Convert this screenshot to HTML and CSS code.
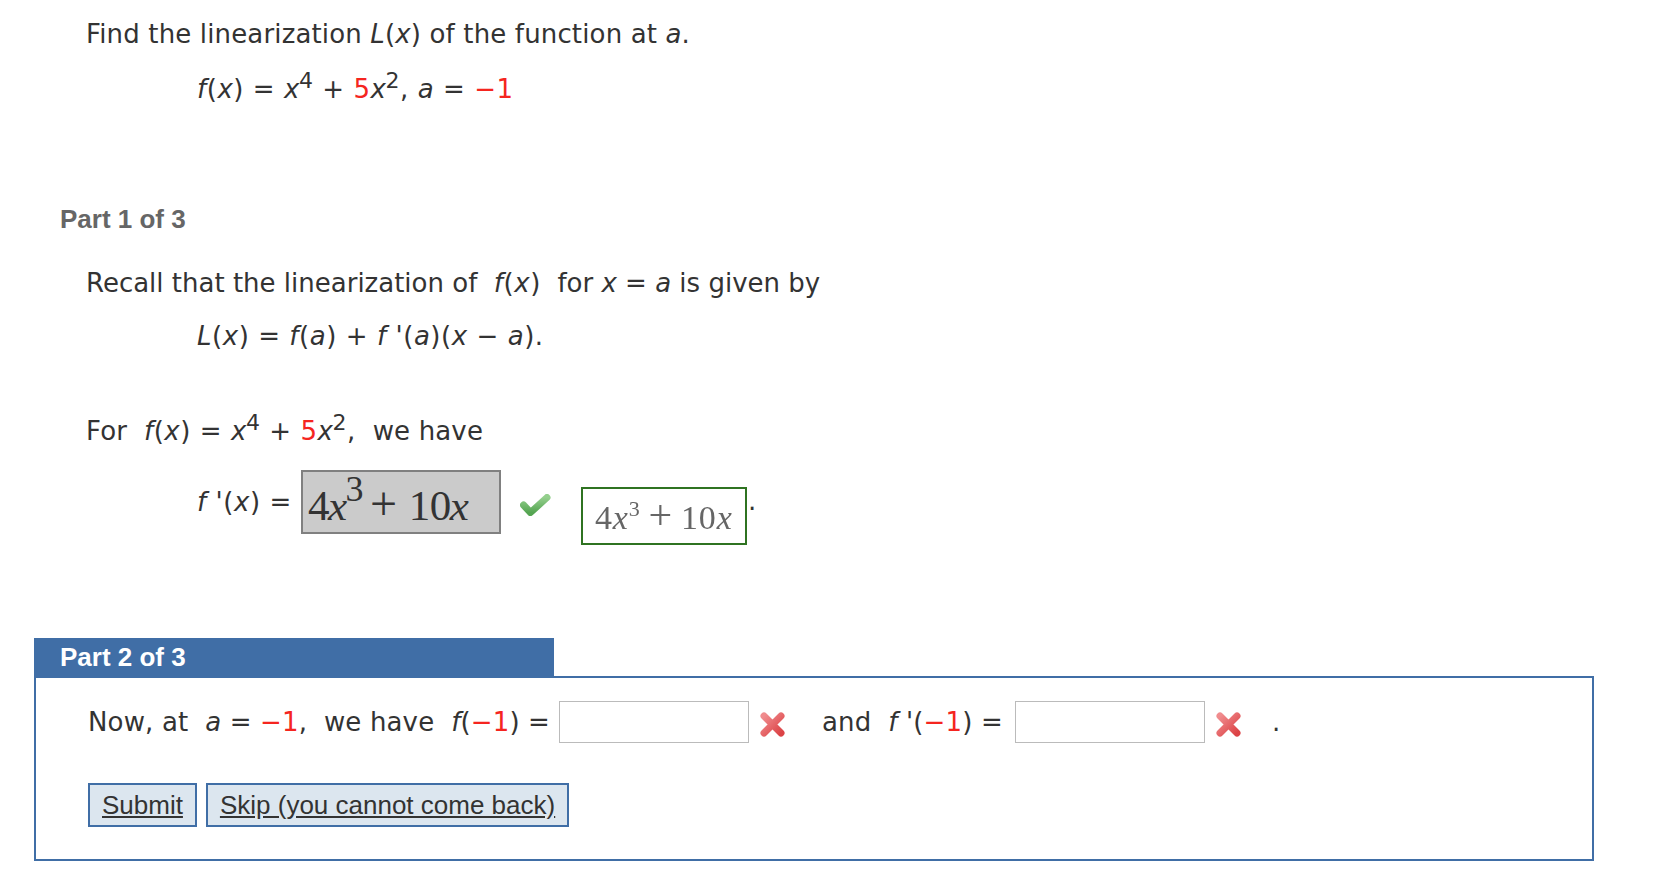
FILE: index.html
```html
<!DOCTYPE html>
<html lang="en">
<head>
<meta charset="utf-8">
<title>Linearization</title>
<link rel="stylesheet" href="styles.css">
</head>
<body>
<main class="page">
  <p class="line first">Find the linearization <i>L</i>(<i>x</i>) of the function at <i>a</i>.</p>
  <p class="line eq eq-one math"><i>f</i>(<i>x</i>) = <i>x</i><sup class="sup">4</sup> + <span class="red">5</span><i>x</i><sup class="sup">2</sup>, <i>a</i> = <span class="red">−1</span></p>

  <h2 class="part-title">Part 1 of 3</h2>
  <p class="line recall">Recall that the linearization of &nbsp;<span class="math"><i>f</i>(<i>x</i>)</span> &nbsp;for <i>x</i> = <i>a</i> is given by</p>
  <p class="line eq eq-two math"><i>L</i>(<i>x</i>) = <i>f</i>(<i>a</i>) + <i>f</i> '(<i>a</i>)(<i>x</i> − <i>a</i>).</p>
  <p class="line for-line">For &nbsp;<span class="math"><i>f</i>(<i>x</i>) = <i>x</i><sup class="sup">4</sup> + <span class="red">5</span><i>x</i><sup class="sup">2</sup>,</span> &nbsp;we have</p>

  <div class="answer-row">
    <span class="deriv-label math"><i>f</i> '(<i>x</i>) =</span>
    <span class="given">4<i class="given-x">x</i><sup class="given-sup">3</sup><span class="op">+</span>10<i class="given-x">x</i></span>
    <svg class="check" viewBox="0 0 31 24" aria-hidden="true">
      <defs>
        <linearGradient id="cg" x1="0" y1="0" x2="0" y2="1">
          <stop offset="0" stop-color="#94cf8d"/>
          <stop offset="1" stop-color="#55a552"/>
        </linearGradient>
        <linearGradient id="xg" x1="0" y1="0" x2="1" y2="1">
          <stop offset="0" stop-color="#f08c8e"/>
          <stop offset="1" stop-color="#dc4346"/>
        </linearGradient>
      </defs>
      <path d="M3.5 12 L10.5 19.5 L27 4.5" fill="none" stroke="url(#cg)" stroke-width="7" stroke-linecap="round" stroke-linejoin="round"/>
    </svg>
    <span class="correct"><span class="correct-math">4<i>x</i><sup class="correct-sup">3</sup><span class="op-small">+</span>10<i>x</i></span></span>
    <span class="period">.</span>
  </div>

  <div class="tab">Part 2 of 3</div>
  <section class="box">
    <div class="fill-row">
      <span class="seg seg-a">Now, at &nbsp;<i>a</i> = <span class="red">−1</span>, &nbsp;we have &nbsp;<i>f</i>(<span class="red">−1</span>) =</span>
      <input class="field" type="text" aria-label="f(-1)">
      <svg class="cross" viewBox="0 0 27 27" aria-hidden="true">
        <path d="M5 5 L22 22 M22 5 L5 22" fill="none" stroke="url(#xg)" stroke-width="7" stroke-linecap="round"/>
      </svg>
      <span class="seg seg-b">and &nbsp;<i>f</i> '(<span class="red">−1</span>) =</span>
      <input class="field" type="text" aria-label="f'(-1)">
      <svg class="cross" viewBox="0 0 27 27" aria-hidden="true">
        <path d="M5 5 L22 22 M22 5 L5 22" fill="none" stroke="url(#xg)" stroke-width="7" stroke-linecap="round"/>
      </svg>
      <span class="seg end-dot">.</span>
    </div>
    <div class="buttons">
      <button class="btn" type="button">Submit</button>
      <button class="btn" type="button">Skip (you cannot come back)</button>
    </div>
  </section>
</main>
</body>
</html>
```
FILE: styles.css
```css
html, body {
  margin: 0;
  padding: 0;
  background: #fff;
}

body {
  color: #333;
  font-family: "DejaVu Sans", Verdana, sans-serif;
  font-size: 26px;
  letter-spacing: 0.15px;
  overflow: hidden;
}

.page {
  height: 886px;
  width: 1678px;
  padding-top: 19px;
  box-sizing: border-box;
}

p, h2 {
  margin: 0;
}

i {
  font-style: italic;
}

.line {
  line-height: 30px;
  height: 30px;
  margin-left: 86px;
  white-space: nowrap;
}

.math {
  letter-spacing: 0.55px;
}

.eq {
  margin-left: 197px;
}

.eq-one {
  margin-top: 25px;
}

.eq-two {
  margin-top: 23px;
}

.recall {
  margin-top: 34px;
  letter-spacing: 0;
}

.for-line {
  margin-top: 65px;
}

.red {
  color: #f5251f;
}

.sup {
  font-size: 22px;
  line-height: 0;
  vertical-align: 10px;
  margin-left: -1px;
}

.part-title {
  margin: 100px 0 0 60px;
  height: 30px;
  font: bold 26px/30px "Liberation Sans", Arial, sans-serif;
  letter-spacing: 0;
  color: #666;
}

.answer-row {
  display: flex;
  align-items: flex-start;
  margin: 24px 0 0 197px;
  height: 75px;
}

.deriv-label {
  width: 104px;
  line-height: 30px;
  margin-top: 17px;
  white-space: nowrap;
}

.given {
  box-sizing: border-box;
  width: 200px;
  height: 64px;
  padding-left: 5px;
  border: 2px solid #808080;
  background: #cbcbcb;
  font: 43px/68px "Liberation Serif", "Times New Roman", serif;
  letter-spacing: -0.5px;
  white-space: nowrap;
  color: #333;
}

.given-x {
  margin-left: -1px;
  margin-right: -1px;
}

.given-sup {
  font-size: 36px;
  line-height: 0;
  vertical-align: 19px;
}

.op {
  margin: 0 12px 0 7px;
  font-size: 48px;
  line-height: 0;
}

.check {
  width: 31px;
  height: 24px;
  margin: 23px 0 0 19px;
  filter: blur(0.5px);
}

.correct {
  box-sizing: border-box;
  width: 166px;
  height: 58px;
  margin: 17px 0 0 30px;
  padding-left: 12px;
  border: 2px solid #2f7321;
  font: 34px/58px "Liberation Serif", "Times New Roman", serif;
  letter-spacing: 0.8px;
  color: #666;
  white-space: nowrap;
}

.correct-math {
  display: inline-block;
  filter: blur(0.4px);
}

.correct-sup {
  font-size: 22px;
  line-height: 0;
  vertical-align: 13px;
}

.op-small {
  margin: 0 8px;
  font-size: 42px;
  line-height: 0;
}

.period {
  line-height: 30px;
  margin-top: 16px;
  margin-left: 1px;
}

.tab {
  box-sizing: border-box;
  width: 520px;
  height: 38px;
  margin: 93px 0 0 34px;
  padding: 4px 0 0 26px;
  background: #406ea6;
  color: #fff;
  font: bold 26px/30px "Liberation Sans", Arial, sans-serif;
  letter-spacing: 0;
}

.box {
  box-sizing: border-box;
  width: 1560px;
  height: 185px;
  margin-left: 34px;
  padding: 23px 0 0 52px;
  border: 2px solid #406ea6;
}

.fill-row {
  display: flex;
  align-items: flex-start;
  height: 42px;
}

.seg {
  line-height: 30px;
  margin-top: 6px;
  white-space: nowrap;
}

.seg-a {
  width: 471px;
}

.seg-b {
  width: 193px;
  margin-left: 36px;
}

.end-dot {
  margin-left: 30px;
}

.field {
  box-sizing: border-box;
  width: 190px;
  height: 42px;
  margin: 0;
  padding: 0;
  border: 1px solid #bbb;
  background: #fff;
}

.cross {
  width: 27px;
  height: 27px;
  margin: 10px 0 0 10px;
  filter: blur(0.5px);
}

.buttons {
  display: flex;
  gap: 9px;
  margin-top: 40px;
}

.btn {
  box-sizing: border-box;
  height: 44px;
  margin: 0;
  padding: 0 12px;
  border: 2px solid #406ea6;
  background: #dce6ef;
  color: #333;
  font: 26px/38px "Liberation Sans", Arial, sans-serif;
  text-decoration: underline;
  cursor: pointer;
}
```
